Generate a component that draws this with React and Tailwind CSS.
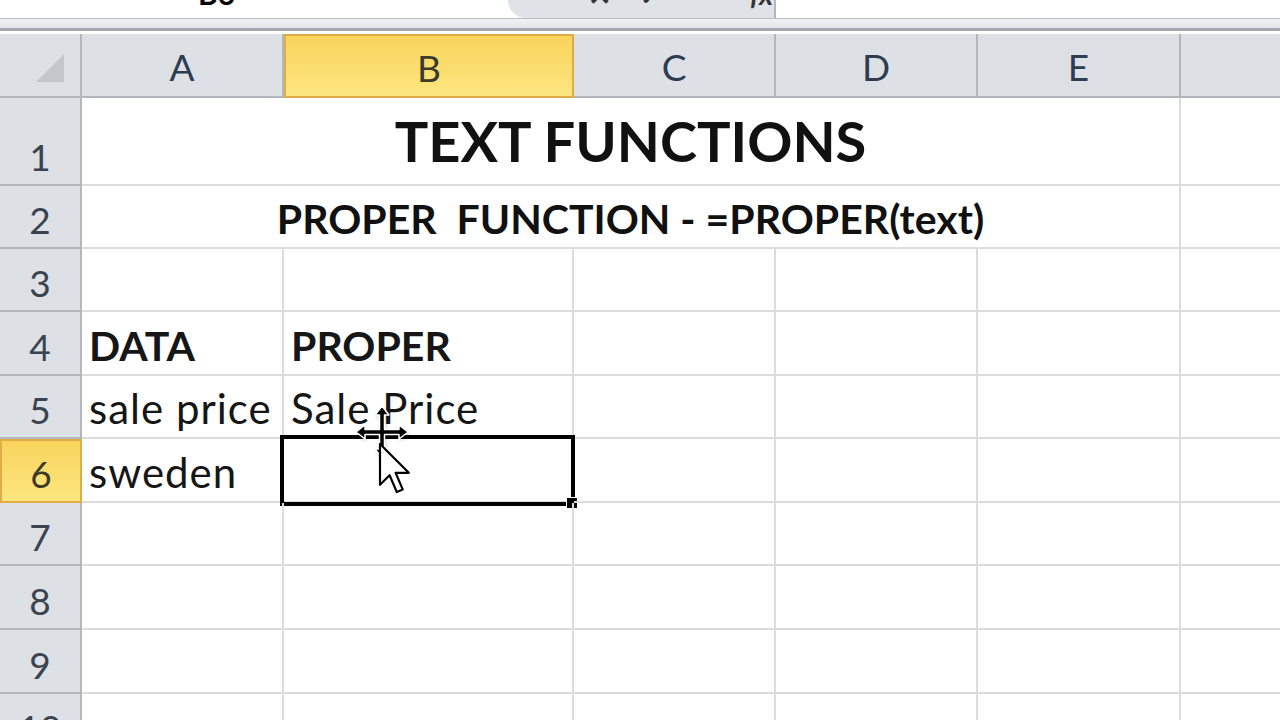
import React from 'react';

const cols = [
  { key: 'A', w: 'w-[202px]' },
  { key: 'B', w: 'w-[290px]' },
  { key: 'C', w: 'w-[202px]' },
  { key: 'D', w: 'w-[202px]' },
  { key: 'E', w: 'w-[203px]' },
  { key: 'F', w: 'w-[200px]' },
];

const rows = [
  { n: 1, h: 'h-[88px]', merged: 'title' },
  { n: 2, h: 'h-[63px]', merged: 'sub' },
  { n: 3, h: 'h-[63px]' },
  { n: 4, h: 'h-[64px]', A: 'DATA', B: 'PROPER', bold: true },
  { n: 5, h: 'h-[63px]', A: 'sale price', B: 'Sale Price' },
  { n: 6, h: 'h-[64px]', A: 'sweden', selected: true },
  { n: 7, h: 'h-[63px]' },
  { n: 8, h: 'h-[64px]' },
  { n: 9, h: 'h-[64px]' },
  { n: 10, h: 'h-[63px]' },
];

function Cursor() {
  return (
    <svg className="absolute left-[350px] top-[402px] pointer-events-none" width="80" height="100" viewBox="0 0 80 100">
      <defs>
        <filter id="sh" x="-30%" y="-30%" width="160%" height="160%">
          <feGaussianBlur stdDeviation="2" />
        </filter>
      </defs>
      {/* soft shadow */}
      <g transform="translate(33,32)" fill="#000" opacity="0.25" filter="url(#sh)">
        <path d="M0 -26 L7 -17 L2.5 -17 L2.5 -2.5 L17 -2.5 L17 -7 L26 0 L17 7 L17 2.5 L2.5 2.5 L2.5 17 L7 17 L0 26 L-7 17 L-2.5 17 L-2.5 2.5 L-17 2.5 L-17 7 L-26 0 L-17 -7 L-17 -2.5 L-2.5 -2.5 L-2.5 -17 L-7 -17 Z" />
      </g>
      {/* move cross */}
      <g transform="translate(32,30)" fill="#000" stroke="#fff" strokeWidth="1.5" strokeLinejoin="round">
        <path d="M0 -26 L7 -17 L2.5 -17 L2.5 -2.5 L17 -2.5 L17 -7 L26 0 L17 7 L17 2.5 L2.5 2.5 L2.5 17 L7 17 L0 26 L-7 17 L-2.5 17 L-2.5 2.5 L-17 2.5 L-17 7 L-26 0 L-17 -7 L-17 -2.5 L-2.5 -2.5 L-2.5 -17 L-7 -17 Z" />
      </g>
      {/* arrow */}
      <g transform="translate(30,42) scale(2.4)" fill="#fff" stroke="#000" strokeWidth="0.9" strokeLinejoin="round">
        <path d="M0 0 L0 17 L4 13 L7 20 L9.5 19 L6.5 12 L12 12 Z" />
      </g>
    </svg>
  );
}

function TopStrip() {
  return (
    <div className="relative h-[34px] bg-white overflow-hidden">
      <div className="h-[19px] border-b border-[#b8bbc0] relative">
        <div className="absolute left-[198px] top-[-22px] text-[30px] font-bold text-black leading-none">B6</div>
        <div className="absolute left-[508px] top-0 w-[268px] h-[18px] bg-[#dfe2e6] rounded-bl-[28px] border-r-2 border-[#b4b7bc] overflow-hidden">
          <div className="absolute left-[80px] top-[-20px] flex gap-[28px] text-[28px] font-bold text-[#333] leading-none">
            <span>✕</span>
            <span>✓</span>
            <span className="italic ml-[60px]">fx</span>
          </div>
        </div>
      </div>
      <div className="h-[12px] bg-gradient-to-b from-[#f1f2f4] to-[#e3e5e8] border-b-[3px] border-[#a3a7ac]" />
    </div>
  );
}

function HeaderRow() {
  return (
    <div className="flex h-[64px]">
      <div className="w-[82px] shrink-0 relative bg-[#dde0e5] border-r-2 border-b-2 border-[#b3b7bd]">
        <div className="absolute right-[16px] bottom-[14px] w-0 h-0 border-l-[28px] border-l-transparent border-b-[28px] border-b-[#c3c6cb]" />
      </div>
      {cols.map((c) => {
        const sel = c.key === 'B';
        return (
          <div
            key={c.key}
            className={
              sel
                ? `${c.w} shrink-0 flex items-center justify-center pt-[3px] bg-gradient-to-b from-[#f8d45c] to-[#fde67f] border-[#e0ad45] border-2 text-[#3d3a2a] text-[37px]`
                : `${c.w} shrink-0 flex items-center justify-center pt-[3px] bg-[#dde0e5] border-r-2 border-b-2 border-[#b3b7bd] text-[#2f3d52] text-[37px]`
            }
          >
            <span className={c.key === 'F' ? 'ml-[190px]' : ''}>{c.key}</span>
          </div>
        );
      })}
    </div>
  );
}

function RowHeader({ n, sel }) {
  return (
    <div
      className={
        sel
          ? 'w-[82px] shrink-0 flex items-end justify-center pb-[9px] bg-gradient-to-b from-[#f8d45c] to-[#fde67f] border-2 border-[#e0ad45] text-[#3d3a2a] text-[37px] leading-none'
          : 'w-[82px] shrink-0 flex items-end justify-center pb-[9px] bg-[#dde0e5] border-r-2 border-b-2 border-[#b3b7bd] text-[#3a4350] text-[37px] leading-none'
      }
    >
      {n}
    </div>
  );
}

function Cell({ w, children, bold, selected }) {
  return (
    <div className={`${w} shrink-0 relative flex items-end pl-[7px] pb-[8px] border-r-2 border-b-2 border-[#dcdcdc] leading-none text-[#161616] whitespace-nowrap ${bold ? 'font-bold text-[41px]' : 'text-[42px] tracking-[1px]'}`}>
      {children}
      {selected && (
        <>
          <div className="absolute -left-[4px] -top-[4px] -right-[3px] -bottom-[5px] border-[4px] border-black" />
          <div className="absolute -right-[6px] -bottom-[8px] w-[12px] h-[12px] bg-black border border-white" />
        </>
      )}
    </div>
  );
}

export default function App() {
  return (
    <div className="relative w-[1280px] h-[720px] overflow-hidden bg-white font-['Lato',sans-serif]">
      <TopStrip />
      <HeaderRow />
      {rows.map((r) => (
        <div key={r.n} className={`flex ${r.h}`}>
          <RowHeader n={r.n} sel={r.selected} />
          {r.merged ? (
            <>
              <div className="w-[1099px] shrink-0 flex items-end justify-center border-r-2 border-b-2 border-[#dcdcdc] text-[#111] whitespace-nowrap font-bold leading-none">
                {r.merged === 'title' ? (
                  <span className="text-[56px] pb-[15px]">TEXT FUNCTIONS</span>
                ) : (
                  <span className="text-[41px] pb-[8px] whitespace-pre">PROPER  FUNCTION - =PROPER(text)</span>
                )}
              </div>
              <div className="w-[200px] shrink-0 border-b-2 border-[#dcdcdc]" />
            </>
          ) : (
            <>
              <Cell w="w-[202px]" bold={r.bold}>{r.A}</Cell>
              <Cell w="w-[290px]" bold={r.bold} selected={r.selected}>{r.B}</Cell>
              <Cell w="w-[202px]" />
              <Cell w="w-[202px]" />
              <Cell w="w-[203px]" />
              <Cell w="w-[200px]" />
            </>
          )}
        </div>
      ))}
      <Cursor />
    </div>
  );
}
